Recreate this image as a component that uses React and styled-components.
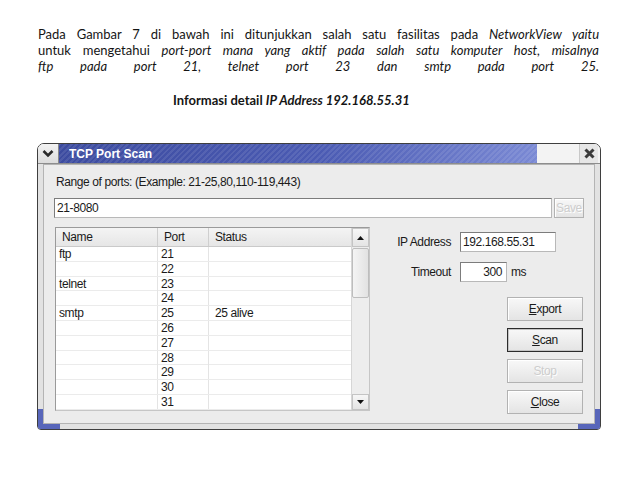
import React from 'react';
import styled, { createGlobalStyle } from 'styled-components';

const GlobalStyle = createGlobalStyle`
  html, body {
    margin: 0;
    padding: 0;
    background: #fff;
  }
  body {
    width: 638px;
    height: 478px;
    overflow: hidden;
  }
`

const Page = styled.div`
  padding-top: 26px;
  width: 638px;
`

const Paragraph = styled.div`
  margin-left: 38px;
  width: 561px;
  font-family: Lato, "Open Sans", sans-serif;
  font-size: 13px;
  line-height: 16px;
  color: #151515;
`

const Line = styled.div`
  text-align: justify;
  text-align-last: justify;
  word-spacing: 1px;
`

const Caption = styled.div`
  margin: 18px 0 0 173px;
  font-family: Lato, "Open Sans", sans-serif;
  font-size: 13px;
  line-height: 16px;
  font-weight: 700;
  color: #151515;
`

const Window = styled.div`
  margin: 35px 0 0 37px;
  width: 564px;
  height: 287px;
  box-sizing: border-box;
  border: 1px solid #3f3f3f;
  border-radius: 7px 7px 4px 4px;
  overflow: hidden;
  display: flex;
  flex-direction: column;
  background: #e4e4e4;
  font-family: "Liberation Sans", Arial, sans-serif;
  font-size: 12px;
  letter-spacing: -0.4px;
  color: #1a1a1a;
`

const TitleBar = styled.div`
  display: flex;
  height: 19px;
  flex-shrink: 0;
  background: #f3f3f3;
  border-bottom: 1px solid #8d8d8d;
`

const MenuButton = styled.div`
  width: 20px;
  display: flex;
  align-items: center;
  justify-content: center;
  background: linear-gradient(#f2f2f2, #dcdcdc);
  border-right: 1px solid #8a8a8a;
`

const Title = styled.div`
  width: 478px;
  display: flex;
  align-items: center;
  padding-left: 10px;
  box-sizing: border-box;
  color: #fff;
  font-weight: 700;
  font-size: 12px;
  letter-spacing: 0;
  background:
    repeating-linear-gradient(135deg, rgba(255, 255, 255, 0.09) 0 2px, transparent 2px 4px),
    linear-gradient(to right, #3c4b9f, #4b5bb3 55%, #7a89d4);
`

const TitleSpace = styled.div`
  flex: 1;
`

const CloseBox = styled.div`
  width: 18px;
  display: flex;
  align-items: center;
  justify-content: center;
  background: #e6e6e6;
  border-left: 1px solid #c8c8c8;
  margin-right: 2px;
`

const Frame = styled.div`
  flex: 1;
  position: relative;
  display: flex;
  padding: 0 5px 5px 5px;
  background: #e2e2e2;

  &::before, &::after {
    content: '';
    position: absolute;
    bottom: 0;
    width: 22px;
    height: 20px;
    box-sizing: border-box;
    border-bottom: 5px solid #5866ba;
  }
  &::before {
    left: 0;
    border-left: 5px solid #5866ba;
  }
  &::after {
    right: 0;
    border-right: 5px solid #5866ba;
  }
`

const Content = styled.div`
  flex: 1;
  display: flex;
  flex-direction: column;
  background: #ececec;
  border: 1px solid #b4b4b4;
  padding: 10px 10px 0 10px;
`

const RangeLabel = styled.div`
  line-height: 14px;
  padding-left: 2px;
`

const InputRow = styled.div`
  display: flex;
  gap: 2px;
  margin-top: 9px;
`

const TextBox = styled.div`
  height: 20px;
  box-sizing: border-box;
  width: ${p => p.$width ? `${p.$width}px` : 'auto'};
  flex: ${p => p.$width ? 'none' : 1};
  background: #fff;
  border: 1px solid #7c7c7c;
  border-right-color: #b8b8b8;
  border-bottom-color: #b8b8b8;
  line-height: 18px;
  padding: 0 ${p => p.$right ? '4px' : '2px'};
  text-align: ${p => p.$right ? 'right' : 'left'};
`

const Button = styled.div`
  width: ${p => p.$small ? '30px' : '76px'};
  height: ${p => p.$small ? '20px' : '24px'};
  box-sizing: border-box;
  display: flex;
  align-items: center;
  justify-content: center;
  background: linear-gradient(#f8f8f8, #e4e4e4);
  border: 1px solid ${p => p.$default ? '#2c2c2c' : '#b2b2b2'};
  box-shadow: ${p => p.$default ? 'inset 0 0 0 1px #c4c4c4' : 'inset 1px 1px 0 #fff'};
  color: ${p => p.$disabled ? '#cdcdcd' : '#1a1a1a'};
  text-shadow: ${p => p.$disabled ? '1px 1px 0 #fff' : 'none'};
`

const MainRow = styled.div`
  display: flex;
  margin-top: 9px;
`

const Table = styled.div`
  margin-left: 1px;
  width: 315px;
  height: 184px;
  box-sizing: border-box;
  display: flex;
  border: 1px solid #9a9a9a;
  border-right-color: #c6c6c6;
  border-bottom-color: #c6c6c6;
  background: #fff;
`

const Grid = styled.div`
  flex: 1;
  overflow: hidden;
`

const cols = `102px 51px 1fr`

const HeaderRow = styled.div`
  display: grid;
  grid-template-columns: ${cols};
  height: 18px;
  background: linear-gradient(#f4f4f4, #e6e6e6);
  border-bottom: 1px solid #cacaca;
`

const HeadCell = styled.div`
  line-height: 18px;
  padding-left: 6px;
  border-right: 1px solid #cfcfcf;
  &:last-child { border-right: 0; }
`

const Row = styled.div`
  display: grid;
  grid-template-columns: ${cols};
  height: 14.8px;
  box-sizing: border-box;
  border-bottom: 1px solid #ebebeb;
`

const Cell = styled.div`
  line-height: 14px;
  padding-left: ${p => p.$pad}px;
  border-right: 1px solid #e4e4e4;
  white-space: nowrap;
  &:last-child { border-right: 0; }
`

const ScrollBar = styled.div`
  width: 17px;
  display: flex;
  flex-direction: column;
  background: #ededed;
  border-left: 1px solid #d6d6d6;
`

const ScrollButton = styled.div`
  height: ${p => p.$h}px;
  display: flex;
  align-items: center;
  justify-content: center;
  background: linear-gradient(#f6f6f6, #e4e4e4);
  border: 1px solid #c4c4c4;
  box-sizing: border-box;
`

const Thumb = styled.div`
  height: 50px;
  margin: 1px 0 0 0;
  box-sizing: border-box;
  background: linear-gradient(to right, #f4f4f4, #e2e2e2);
  border: 1px solid #bdbdbd;
  border-radius: 2px;
`

const Track = styled.div`
  flex: 1;
`

const SidePanel = styled.div`
  flex: 1;
  display: flex;
  flex-direction: column;
  padding-top: 5px;
`

const Fields = styled.div`
  display: grid;
  grid-template-columns: 81px auto;
  column-gap: 9px;
  row-gap: 9px;
  align-items: center;
`

const FieldLabel = styled.div`
  text-align: right;
`

const FieldValue = styled.div`
  display: flex;
  align-items: center;
  gap: 4px;
  height: ${p => p.$h}px;
`

const Buttons = styled.div`
  display: flex;
  flex-direction: column;
  align-self: flex-end;
  gap: 7px;
  margin-top: 15px;
  margin-right: 1px;
`

const Chevron = () => (
  <svg width="12" height="9" viewBox="0 0 12 9">
    <polyline points="1.5,2 6,6.5 10.5,2" fill="none" stroke="#2a2a2a" strokeWidth="2.6" />
  </svg>
)

const CloseIcon = () => (
  <svg width="11" height="11" viewBox="0 0 11 11">
    <path d="M1.5 1.5 L9.5 9.5 M9.5 1.5 L1.5 9.5" stroke="#3a3a3a" strokeWidth="3" />
  </svg>
)

const Arrow = ({up}) => (
  <svg width="7" height="4" viewBox="0 0 7 4">
    <polygon points={up ? '0,4 7,4 3.5,0' : '0,0 7,0 3.5,4'} fill="#111" />
  </svg>
)

const NAMES = {21: 'ftp', 23: 'telnet', 25: 'smtp'}
const PORTS = Array.from({length: 11}, (_, i) => 21 + i)

export default function App() {
  return <Page>
    <GlobalStyle/>
    <Paragraph>
      <Line>Pada Gambar 7 di bawah ini ditunjukkan salah satu fasilitas pada <i>NetworkView yaitu</i></Line>
      <Line>untuk mengetahui <i>port-port mana yang aktif pada salah satu komputer host, misalnya</i></Line>
      <Line><i>ftp pada port 21, telnet port 23 dan smtp pada port 25.</i></Line>
    </Paragraph>
    <Caption>Informasi detail <i>IP Address 192.168.55.31</i></Caption>

    <Window>
      <TitleBar>
        <MenuButton><Chevron/></MenuButton>
        <Title>TCP Port Scan</Title>
        <TitleSpace/>
        <CloseBox><CloseIcon/></CloseBox>
      </TitleBar>
      <Frame>
        <Content>
          <RangeLabel>Range of ports: (Example: 21-25,80,110-119,443)</RangeLabel>
          <InputRow>
            <TextBox>21-8080</TextBox>
            <Button $small $disabled>Save</Button>
          </InputRow>
          <MainRow>
            <Table>
              <Grid>
                <HeaderRow>
                  <HeadCell>Name</HeadCell>
                  <HeadCell>Port</HeadCell>
                  <HeadCell>Status</HeadCell>
                </HeaderRow>
                {PORTS.map(port => (
                  <Row key={port}>
                    <Cell $pad={3}>{NAMES[port] || ''}</Cell>
                    <Cell $pad={3}>{port}</Cell>
                    <Cell $pad={6}>{port === 25 ? '25 alive' : ''}</Cell>
                  </Row>
                ))}
              </Grid>
              <ScrollBar>
                <ScrollButton $h={19}><Arrow up/></ScrollButton>
                <Thumb/>
                <Track/>
                <ScrollButton $h={16}><Arrow/></ScrollButton>
              </ScrollBar>
            </Table>
            <SidePanel>
              <Fields>
                <FieldLabel>IP Address</FieldLabel>
                <FieldValue $h={20}><TextBox $width={96}>192.168.55.31</TextBox></FieldValue>
                <FieldLabel>Timeout</FieldLabel>
                <FieldValue $h={21}><TextBox $width={47} $right>300</TextBox>ms</FieldValue>
              </Fields>
              <Buttons>
                <Button><span><u>E</u>xport</span></Button>
                <Button $default><span><u>S</u>can</span></Button>
                <Button $disabled>Stop</Button>
                <Button><span><u>C</u>lose</span></Button>
              </Buttons>
            </SidePanel>
          </MainRow>
        </Content>
      </Frame>
    </Window>
  </Page>
}
